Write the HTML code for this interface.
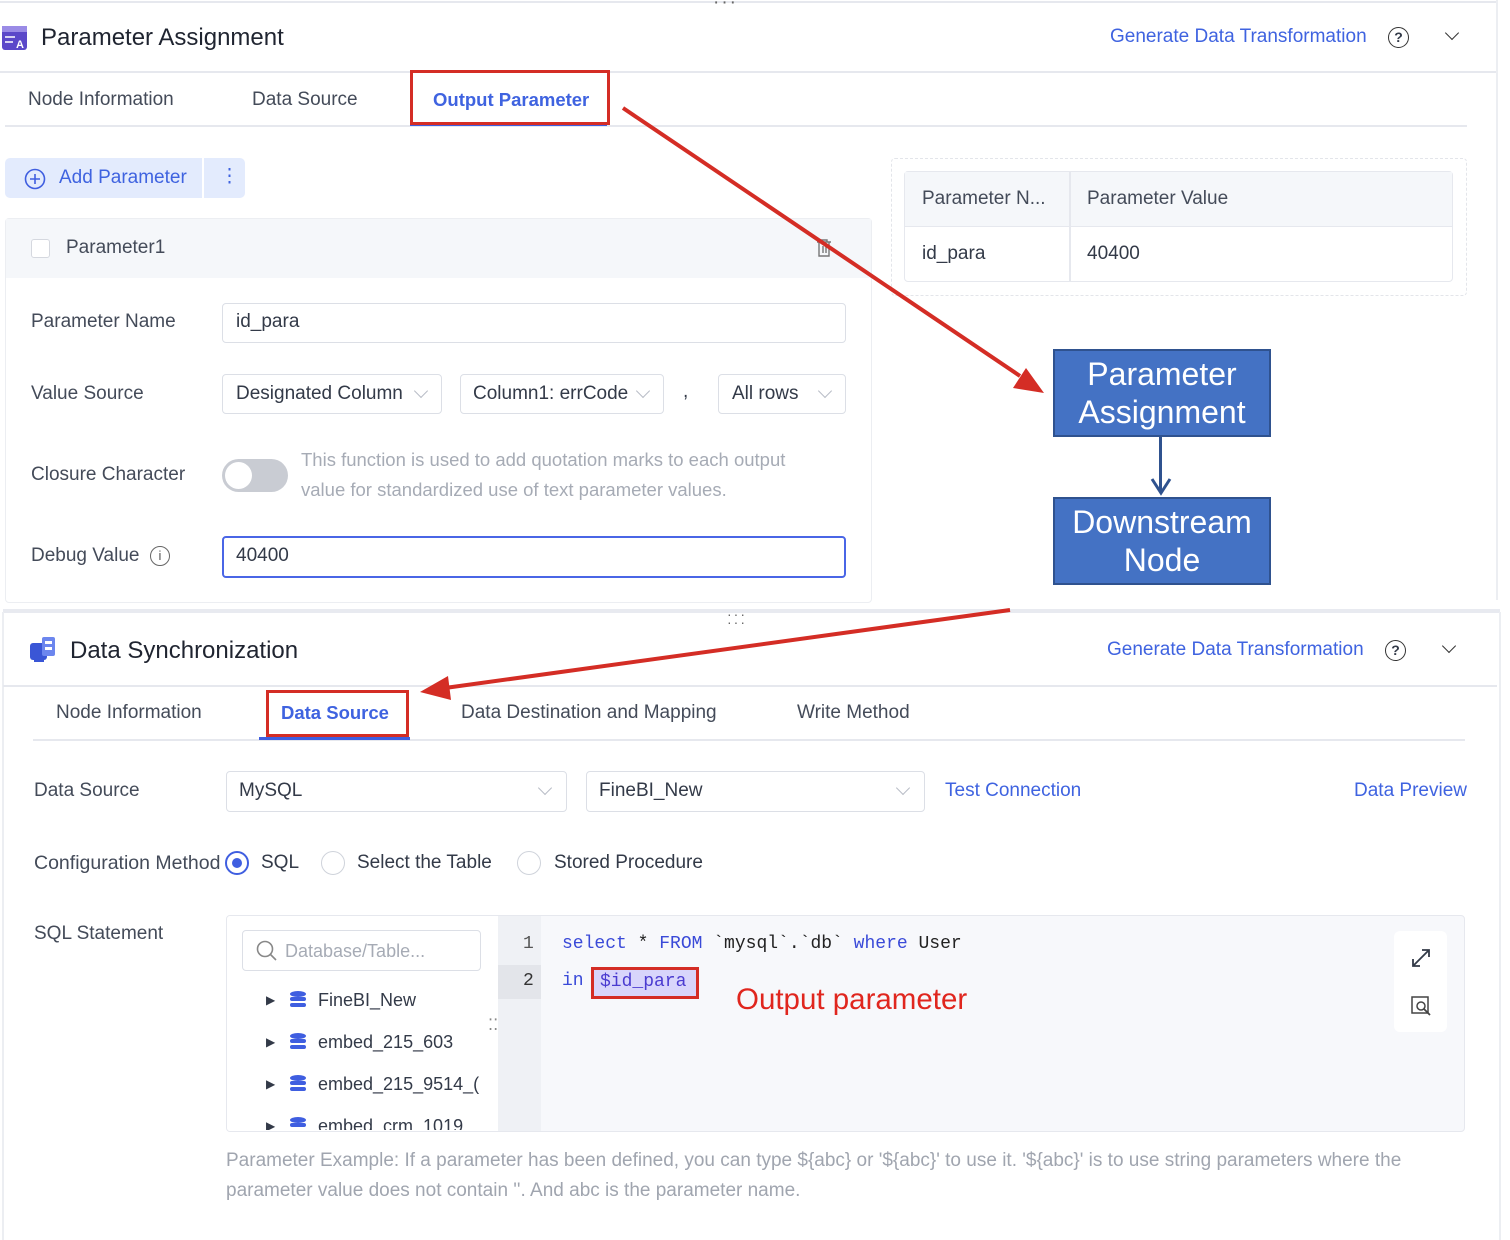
<!DOCTYPE html>
<html><head><meta charset="utf-8"><style>
*{margin:0;padding:0;box-sizing:border-box}
body{width:1510px;height:1240px;position:relative;overflow:hidden;background:#fff;font-family:"Liberation Sans",sans-serif;color:#333a48}
.a{position:absolute}
.t{position:absolute;font-size:19px;line-height:22px;white-space:nowrap}
.lbl{color:#444b59}
.blue{color:#3f63e0}
.box{position:absolute;border:1.5px solid #dcdfe6;border-radius:4px;background:#fff}
.chev{position:absolute;width:10px;height:10px;border-right:1.3px solid #b8bcc6;border-bottom:1.3px solid #b8bcc6;transform:rotate(45deg)}
.line{position:absolute;height:2px;background:#e6e8ee}
.radio{position:absolute;width:24px;height:24px;border:1.5px solid #cfd3db;border-radius:50%;background:#fff}
.flow{position:absolute;background:#4472c4;border:2px solid #2f528f;color:#fff;font-size:32px;line-height:38px;text-align:center;display:flex;align-items:center;justify-content:center}
.mono{font-family:"Liberation Mono",monospace;font-size:18px;line-height:22px;position:absolute;white-space:nowrap}
</style></head><body>
<div class="line" style="left:0;top:1px;width:1497px"></div>
<div class="t" style="left:713px;top:-8px;color:#666;letter-spacing:2px">···</div>
<svg class="a" style="left:2px;top:26px" width="25" height="24" viewBox="0 0 25 24"><rect x="0" y="0" width="25" height="24" rx="3" fill="#5b48c9"/><rect x="0" y="0" width="25" height="6" fill="#9a8be6"/><path d="M3 11h10M3 16h8" stroke="#fff" stroke-width="1.6"/><text x="14" y="22" font-size="11" fill="#fff" font-family="Liberation Sans" font-weight="bold">A</text></svg>
<div class="t" style="left:41px;top:24px;font-size:24px;line-height:28px;color:#1f2430">Parameter Assignment</div>
<div class="t blue" style="left:1110px;top:26px">Generate Data Transformation</div>
<div class="a" style="left:1388px;top:27px;width:21px;height:21px;border:1.8px solid #333;border-radius:50%;font-size:14px;line-height:18px;text-align:center;font-weight:bold">?</div>
<div class="chev" style="left:1447px;top:28px;border-color:#333;border-width:1.8px"></div>
<div class="line" style="left:0;top:71px;width:1497px"></div>
<div class="a" style="left:1496px;top:0;width:2px;height:600px;background:#eceef2"></div>

<div class="t lbl" style="left:28px;top:89px">Node Information</div>
<div class="t lbl" style="left:252px;top:89px">Data Source</div>
<div class="t blue" style="left:433px;top:89px;font-weight:bold;font-size:18.5px">Output Parameter</div>
<div class="line" style="left:5px;top:125px;width:1462px"></div>
<div class="a" style="left:410px;top:123px;width:197px;height:3px;background:#3f5ee0"></div>
<div class="a" style="left:410px;top:70px;width:200px;height:55px;border:3.5px solid #d42d25"></div>

<div class="a" style="left:5px;top:158px;width:240px;height:40px;background:#e3ebfd;border-radius:5px"></div>
<div class="a" style="left:202px;top:158px;width:2px;height:40px;background:#fff"></div>
<svg class="a" style="left:24px;top:168px" width="22" height="22"><circle cx="11" cy="11" r="9.5" fill="none" stroke="#3f5ee0" stroke-width="1.6"/><path d="M11 6v10M6 11h10" stroke="#3f5ee0" stroke-width="1.6"/></svg>
<div class="t blue" style="left:59px;top:167px">Add Parameter</div>
<div class="t blue" style="left:220px;top:166px">⋮</div>

<div class="a" style="left:5px;top:218px;width:867px;height:385px;border:1.5px solid #eceef2;border-radius:4px"></div>
<div class="a" style="left:6px;top:219px;width:865px;height:59px;background:#f5f7fa"></div>
<div class="a" style="left:31px;top:239px;width:19px;height:19px;border:1.5px solid #d5d8df;border-radius:3px;background:#fff"></div>
<div class="t lbl" style="left:66px;top:237px">Parameter1</div>
<svg class="a" style="left:815px;top:238px" width="18" height="20"><path d="M2 4h14M6 4V2h6v2M4 4v14h10V4M8 8v7M11 8v7" fill="none" stroke="#777" stroke-width="1.4"/></svg>

<div class="t lbl" style="left:31px;top:311px">Parameter Name</div>
<div class="box" style="left:222px;top:303px;width:624px;height:40px"></div>
<div class="t" style="left:236px;top:311px">id_para</div>

<div class="t lbl" style="left:31px;top:383px">Value Source</div>
<div class="box" style="left:222px;top:374px;width:220px;height:40px"></div>
<div class="t" style="left:236px;top:383px">Designated Column</div><div class="chev" style="left:416px;top:386px"></div>
<div class="box" style="left:460px;top:374px;width:204px;height:40px"></div>
<div class="t" style="left:473px;top:383px">Column1: errCode</div><div class="chev" style="left:638px;top:386px"></div>
<div class="t" style="left:683px;top:381px">,</div>
<div class="box" style="left:718px;top:374px;width:128px;height:40px"></div>
<div class="t" style="left:732px;top:383px">All rows</div><div class="chev" style="left:820px;top:386px"></div>

<div class="t lbl" style="left:31px;top:464px">Closure Character</div>
<div class="a" style="left:222px;top:459px;width:66px;height:33px;border-radius:17px;background:#c9ccd3"></div>
<div class="a" style="left:225px;top:462px;width:27px;height:27px;border-radius:50%;background:#fff"></div>
<div class="t" style="left:301px;top:449px;color:#a6abb5;font-size:18.5px">This function is used to add quotation marks to each output</div>
<div class="t" style="left:301px;top:479px;color:#a6abb5;font-size:18.5px">value for standardized use of text parameter values.</div>

<div class="t lbl" style="left:31px;top:545px">Debug Value</div>
<div class="a" style="left:150px;top:546px;width:20px;height:20px;border:1.5px solid #666;border-radius:50%;font-size:13px;line-height:17px;text-align:center;color:#555">i</div>
<div class="box" style="left:222px;top:536px;width:624px;height:42px;border:2px solid #4a66e6"></div>
<div class="t" style="left:236px;top:545px">40400</div>

<div class="a" style="left:891px;top:158px;width:576px;height:138px;border:1.5px dashed #e3e5ea;border-radius:4px"></div>
<div class="a" style="left:904px;top:171px;width:549px;height:111px;border:1.5px solid #e6e8ee;border-radius:4px"></div>
<div class="a" style="left:905px;top:172px;width:547px;height:55px;background:#f5f7fa;border-bottom:1.5px solid #e6e8ee"></div>
<div class="a" style="left:1069px;top:172px;width:1.5px;height:109px;background:#e6e8ee"></div>
<div class="t lbl" style="left:922px;top:188px">Parameter N...</div>
<div class="t lbl" style="left:1087px;top:188px">Parameter Value</div>
<div class="t" style="left:922px;top:243px">id_para</div>
<div class="t" style="left:1087px;top:243px">40400</div>

<div class="flow" style="left:1053px;top:349px;width:218px;height:88px">Parameter<br>Assignment</div>
<div class="a" style="left:1159px;top:437px;width:3px;height:54px;background:#2f528f"></div>
<svg class="a" style="left:1149px;top:474px" width="24" height="22"><path d="M3 5l9 14l9-14" fill="none" stroke="#2f528f" stroke-width="3"/></svg>
<div class="flow" style="left:1053px;top:497px;width:218px;height:88px">Downstream<br>Node</div>

<div class="a" style="left:3px;top:609px;width:1497px;height:4px;background:#e8eaf0"></div>
<div class="a" style="left:2px;top:612px;width:2px;height:628px;background:#eceef2"></div>
<div class="a" style="left:1499px;top:612px;width:2px;height:628px;background:#eceef2"></div>
<div class="t" style="left:727px;top:603px;color:#666;letter-spacing:2px;font-size:14px">···</div>
<div class="t" style="left:727px;top:611px;color:#666;letter-spacing:2px;font-size:14px">···</div>
<svg class="a" style="left:30px;top:637px" width="26" height="27"><rect x="0" y="6" width="17" height="17" rx="3" fill="#3a56d6"/><rect x="12" y="0" width="13" height="19" rx="2" fill="#6c86ee"/><rect x="15" y="4" width="7" height="3" fill="#fff"/><rect x="15" y="10" width="7" height="3" fill="#fff"/><rect x="4" y="22" width="10" height="3" fill="#3a56d6"/></svg>
<div class="t" style="left:70px;top:637px;font-size:24px;line-height:28px;color:#1f2430">Data Synchronization</div>
<div class="t blue" style="left:1107px;top:639px">Generate Data Transformation</div>
<div class="a" style="left:1385px;top:640px;width:21px;height:21px;border:1.8px solid #333;border-radius:50%;font-size:14px;line-height:18px;text-align:center;font-weight:bold">?</div>
<div class="chev" style="left:1444px;top:641px;border-color:#333;border-width:1.8px"></div>
<div class="line" style="left:3px;top:685px;width:1494px"></div>

<div class="t lbl" style="left:56px;top:702px">Node Information</div>
<div class="t blue" style="left:281px;top:702px;font-weight:bold;font-size:18.5px">Data Source</div>
<div class="t lbl" style="left:461px;top:702px">Data Destination and Mapping</div>
<div class="t lbl" style="left:797px;top:702px">Write Method</div>
<div class="line" style="left:33px;top:739px;width:1432px"></div>
<div class="a" style="left:259px;top:737px;width:151px;height:3px;background:#3f5ee0"></div>
<div class="a" style="left:266px;top:690px;width:143px;height:47px;border:3.5px solid #d42d25"></div>

<div class="t lbl" style="left:34px;top:780px">Data Source</div>
<div class="box" style="left:226px;top:771px;width:341px;height:41px"></div>
<div class="t" style="left:239px;top:780px">MySQL</div><div class="chev" style="left:540px;top:783px"></div>
<div class="box" style="left:586px;top:771px;width:339px;height:41px"></div>
<div class="t" style="left:599px;top:780px">FineBI_New</div><div class="chev" style="left:898px;top:783px"></div>
<div class="t blue" style="left:945px;top:780px">Test Connection</div>
<div class="t blue" style="left:1354px;top:780px">Data Preview</div>

<div class="t lbl" style="left:34px;top:852px;font-size:19.5px">Configuration Method</div>
<div class="radio" style="left:225px;top:851px;border-color:#3f5ee0;border-width:2px"></div>
<div class="a" style="left:232px;top:858px;width:10px;height:10px;border-radius:50%;background:#3f5ee0"></div>
<div class="t" style="left:261px;top:852px">SQL</div>
<div class="radio" style="left:321px;top:851px"></div>
<div class="t" style="left:357px;top:852px">Select the Table</div>
<div class="radio" style="left:517px;top:851px"></div>
<div class="t" style="left:554px;top:852px">Stored Procedure</div>

<div class="t lbl" style="left:34px;top:923px">SQL Statement</div>
<div class="a" style="left:226px;top:915px;width:1239px;height:217px;border:1.5px solid #e6e8ee;border-radius:4px;background:#f7f8fb;overflow:hidden">
  <div class="a" style="left:0;top:0;width:271px;height:217px;background:#fff"></div>
  <div class="a" style="left:271px;top:0;width:43px;height:217px;background:#eff1f5"></div>
  <div class="a" style="left:271px;top:49px;width:43px;height:34px;background:#e3e5ea"></div>
</div>
<div class="box" style="left:242px;top:930px;width:239px;height:41px"></div>
<svg class="a" style="left:256px;top:940px" width="22" height="22"><circle cx="9" cy="9" r="7.5" fill="none" stroke="#888" stroke-width="1.6"/><path d="M14.5 14.5L20 20" stroke="#888" stroke-width="1.6"/></svg>
<div class="t" style="left:285px;top:940px;color:#a6abb5;font-size:18px">Database/Table...</div>
<div class="a" style="left:226px;top:985px;width:271px;height:145px;overflow:hidden">
  <div class="t" style="left:40px;top:4px;font-size:12px">▶</div>
  <div class="t" style="left:92px;top:4px;font-size:18px">FineBI_New</div>
  <div class="t" style="left:40px;top:46px;font-size:12px">▶</div>
  <div class="t" style="left:92px;top:46px;font-size:18px">embed_215_603</div>
  <div class="t" style="left:40px;top:88px;font-size:12px">▶</div>
  <div class="t" style="left:92px;top:88px;font-size:18px">embed_215_9514_(</div>
  <div class="t" style="left:40px;top:130px;font-size:12px">▶</div>
  <div class="t" style="left:92px;top:130px;font-size:18px">embed_crm_1019</div>
  <svg class="a" style="left:63px;top:5px" width="18" height="140"><g fill="#3f5ee0"><ellipse cx="9" cy="4" rx="8" ry="3"/><rect x="1" y="7" width="16" height="4" rx="2"/><rect x="1" y="13" width="16" height="4" rx="2"/></g><g fill="#3f5ee0" transform="translate(0,42)"><ellipse cx="9" cy="4" rx="8" ry="3"/><rect x="1" y="7" width="16" height="4" rx="2"/><rect x="1" y="13" width="16" height="4" rx="2"/></g><g fill="#3f5ee0" transform="translate(0,84)"><ellipse cx="9" cy="4" rx="8" ry="3"/><rect x="1" y="7" width="16" height="4" rx="2"/><rect x="1" y="13" width="16" height="4" rx="2"/></g><g fill="#3f5ee0" transform="translate(0,126)"><ellipse cx="9" cy="4" rx="8" ry="3"/><rect x="1" y="7" width="16" height="4" rx="2"/></g></svg>
</div>
<div class="t" style="left:488px;top:1020px;color:#888;font-size:16px;line-height:12px">⁚⁚</div>
<div class="mono" style="left:523px;top:933px;color:#555">1</div>
<div class="mono" style="left:523px;top:970px;color:#333">2</div>
<div class="mono" style="left:562px;top:933px;color:#222"><span style="color:#3a4ad8">select</span> * <span style="color:#3a4ad8">FROM</span> `mysql`.`db` <span style="color:#3a4ad8">where</span> User</div>
<div class="mono" style="left:562px;top:970px;color:#3a4ad8">in</div>
<div class="a" style="left:591px;top:967px;width:108px;height:32px;border:3.5px solid #d42d25;background:#d8d5fb"></div>
<div class="mono" style="left:600px;top:971px;color:#4a3bd0">$id_para</div>
<div class="t" style="left:736px;top:983px;color:#e0261e;font-size:29.5px;line-height:34px">Output parameter</div>
<div class="a" style="left:1394px;top:931px;width:53px;height:101px;background:#fff;border-radius:6px"></div>
<svg class="a" style="left:1410px;top:947px" width="22" height="22"><path d="M3 19L19 3M12 3h7v7M3 12v7h7" fill="none" stroke="#333a48" stroke-width="1.8"/></svg>
<svg class="a" style="left:1410px;top:995px" width="22" height="22"><rect x="2" y="2" width="16" height="16" fill="none" stroke="#444" stroke-width="1.5"/><circle cx="11" cy="11" r="4" fill="none" stroke="#444" stroke-width="1.5"/><path d="M14 14l6 6" stroke="#444" stroke-width="1.8"/></svg>

<div class="t" style="left:226px;top:1150px;color:#a0a5af;font-size:19px">Parameter Example: If a parameter has been defined, you can type ${abc} or '${abc}' to use it. '${abc}' is to use string parameters where the</div>
<div class="t" style="left:226px;top:1180px;color:#a0a5af;font-size:19px">parameter value does not contain ''. And abc is the parameter name.</div>

<svg class="a" style="left:0;top:0" width="1510" height="1240">
<line x1="623" y1="108" x2="1020" y2="376" stroke="#d42d25" stroke-width="4"/>
<polygon points="1044,393 1013,388 1026,368" fill="#d42d25"/>
<line x1="1010" y1="610" x2="445" y2="688" stroke="#d42d25" stroke-width="4"/>
<polygon points="420,692 448,676 451,700" fill="#d42d25"/>
</svg>
</body></html>
